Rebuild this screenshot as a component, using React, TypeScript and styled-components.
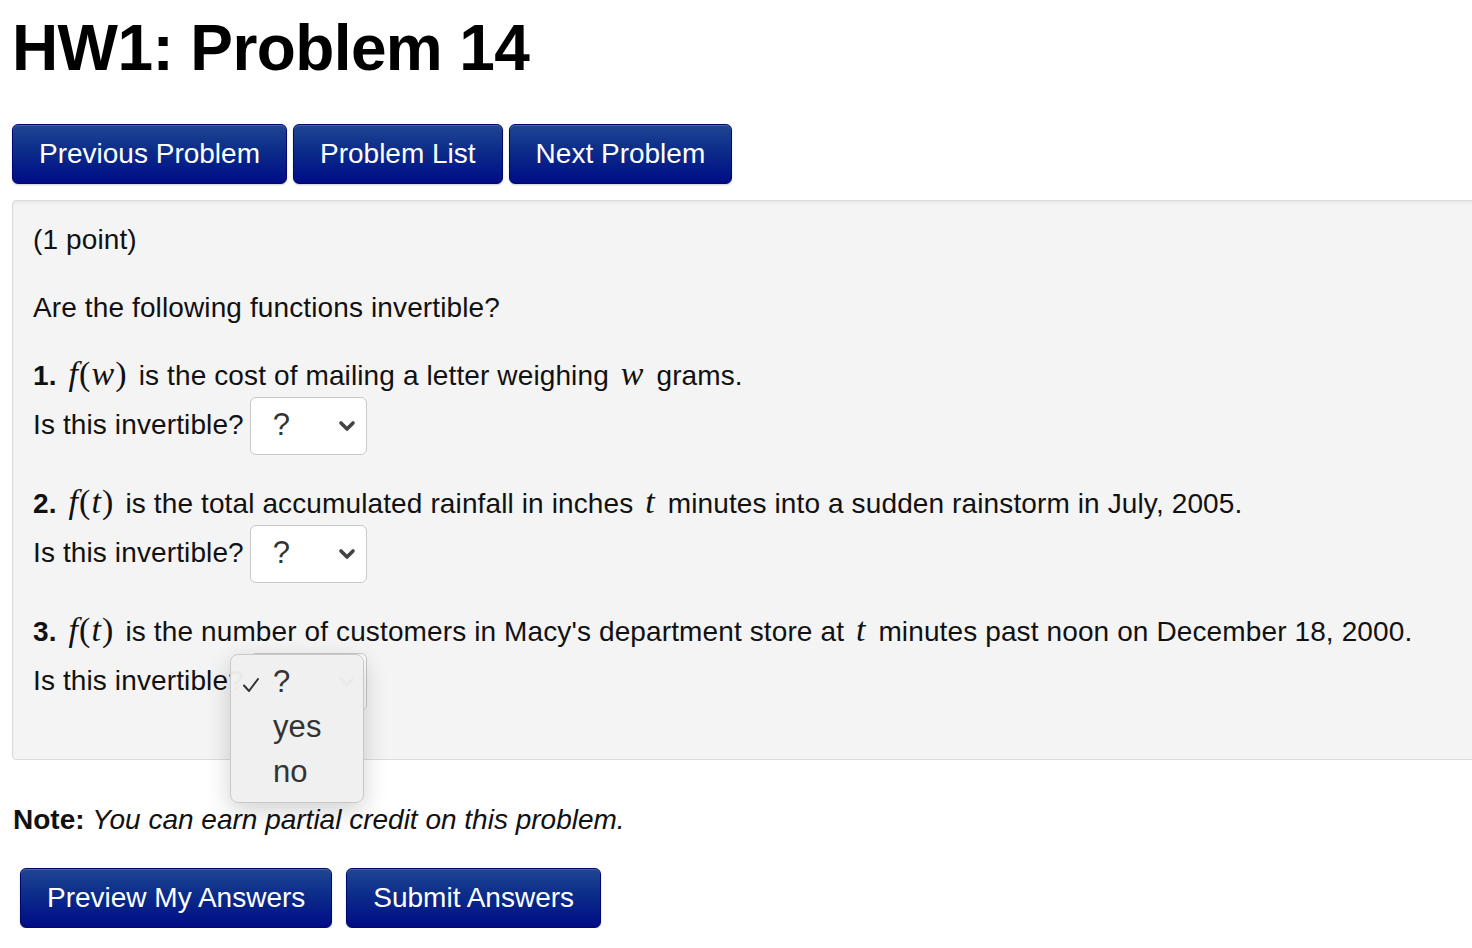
import React from 'react';
import styled, { createGlobalStyle } from 'styled-components';

const Global = createGlobalStyle`
  html, body {
    margin: 0;
    padding: 0;
    background: #fff;
    overflow: hidden;
  }
  body {
    font-family: 'Liberation Sans', Arial, Helvetica, sans-serif;
    color: #111;
  }
`;

const Page = styled.div`
  padding: 0 0 0 12px;
  width: 1480px;
`;

const Title = styled.h1`
  margin: 0;
  padding-top: 12px;
  font-size: 64px;
  line-height: 72px;
  font-weight: 700;
  letter-spacing: -0.6px;
  color: #000;
`;

const NavBar = styled.div<{ indent?: number }>`
  display: flex;
  gap: ${(p) => (p.indent ? 14 : 6)}px;
  margin-left: ${(p) => p.indent || 0}px;
`;

const NavButton = styled.button`
  height: 60px;
  padding: 0 26px;
  border: 1px solid #00086e;
  border-radius: 6px;
  background: linear-gradient(to bottom, #1f4592 0%, #0b2c8a 45%, #000c86 100%);
  box-shadow: inset 0 1px 0 rgba(255, 255, 255, 0.18), 0 1px 2px rgba(0, 0, 0, 0.2);
  color: #fff;
  font-family: 'Liberation Sans', Arial, sans-serif;
  font-size: 28px;
  cursor: pointer;
`;

const Panel = styled.div`
  position: relative;
  margin-top: 16px;
  padding: 19px 20px 48px;
  background: #f4f4f4;
  border: 1px solid #dcdcdc;
  border-radius: 4px 0 0 4px;
  box-shadow: inset 0 2px 3px rgba(0, 0, 0, 0.05);
  font-size: 28px;
  letter-spacing: 0.12px;
`;

const Line = styled.div<{ gap?: number }>`
  height: 40px;
  line-height: 40px;
  margin-top: ${(p) => p.gap || 0}px;
  white-space: nowrap;
`;

const Num = styled.b`
  font-weight: 700;
`;

const Math = styled.span`
  font-family: 'Liberation Serif', 'Times New Roman', serif;
  font-size: 34px;
  line-height: 30px;
  margin: 0 4px 0 3px;
`;

const Var = styled.i`
  font-style: italic;
  padding: 0 1px;
`;

const AnswerRow = styled.div`
  display: flex;
  align-items: center;
  gap: 6px;
  margin-top: 1px;
  height: 58px;
  span {
    margin-top: -3px;
  }
`;

const SelectBox = styled.div`
  box-sizing: border-box;
  width: 117px;
  height: 58px;
  display: flex;
  align-items: center;
  justify-content: space-between;
  padding: 0 9px 0 22px;
  background: #fff;
  border: 1px solid #c9c9c9;
  border-radius: 6px;
  color: #333;
  font-size: 31px;
`;

const Menu = styled.div`
  position: absolute;
  left: 217px;
  top: 453px;
  width: 134px;
  box-sizing: border-box;
  padding: 4px 0 8px;
  background: rgba(240, 240, 240, 0.97);
  border: 1px solid #c8c8c8;
  border-radius: 8px;
  box-shadow: 0 8px 24px rgba(0, 0, 0, 0.18);
  color: #333;
  font-size: 31px;
`;

const MenuItem = styled.div`
  display: flex;
  align-items: center;
  height: 45px;
  padding-left: 42px;
  position: relative;
`;

const Check = styled.svg`
  position: absolute;
  left: 11px;
  top: 18px;
`;

const Note = styled.p`
  margin: 40px 0 28px 1px;
  font-size: 28px;
  line-height: 40px;
  em {
    font-style: italic;
  }
`;

const Chevron = () => (
  <svg width="20" height="12" viewBox="0 0 20 12">
    <path d="M4 3 L10 9 L16 3" fill="none" stroke="#444" strokeWidth="3.6" strokeLinecap="round" strokeLinejoin="round" />
  </svg>
);

const Select = () => (
  <SelectBox>
    <span>?</span>
    <Chevron />
  </SelectBox>
);

const items: { n: string; v: string; text: React.ReactNode }[] = [
  { n: '1.', v: 'w', text: <> is the cost of mailing a letter weighing <Math><Var>w</Var></Math> grams.</> },
  { n: '2.', v: 't', text: <> is the total accumulated rainfall in inches <Math><Var>t</Var></Math> minutes into a sudden rainstorm in July, 2005.</> },
  { n: '3.', v: 't', text: <> is the number of customers in Macy's department store at <Math><Var>t</Var></Math> minutes past noon on December 18, 2000.</> },
];

export default function App() {
  return (
    <Page>
      <Global />
      <Title>HW1: Problem 14</Title>
      <NavBar style={{ marginTop: 40 }}>
        <NavButton>Previous Problem</NavButton>
        <NavButton>Problem List</NavButton>
        <NavButton>Next Problem</NavButton>
      </NavBar>
      <Panel>
        <Line>(1 point)</Line>
        <Line gap={28}>Are the following functions invertible?</Line>
        {items.map((it, i) => (
          <div key={it.n}>
            <Line gap={i === 0 ? 28 : 29}>
              <Num>{it.n}</Num>{' '}
              <Math>
                <Var>f</Var>(<Var>{it.v}</Var>)
              </Math>
              {it.text}
            </Line>
            <AnswerRow>
              <span>Is this invertible?</span>
              <Select />
            </AnswerRow>
          </div>
        ))}
        <Menu>
          <MenuItem>
            <Check width="18" height="16" viewBox="0 0 18 16">
              <path d="M2 8.5 L7 14 L16 2" fill="none" stroke="#333" strokeWidth="2" strokeLinecap="round" strokeLinejoin="round" />
            </Check>
            ?
          </MenuItem>
          <MenuItem>yes</MenuItem>
          <MenuItem>no</MenuItem>
        </Menu>
      </Panel>
      <Note>
        <b>Note:</b> <em>You can earn partial credit on this problem.</em>
      </Note>
      <NavBar indent={8}>
        <NavButton>Preview My Answers</NavButton>
        <NavButton>Submit Answers</NavButton>
      </NavBar>
    </Page>
  );
}
